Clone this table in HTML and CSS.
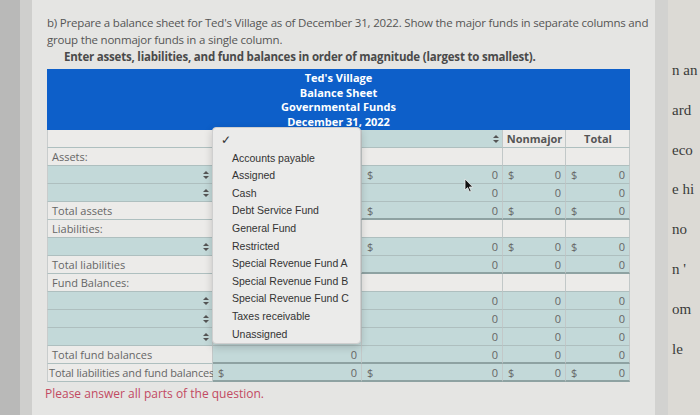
FILE: index.html
```html
<!DOCTYPE html>
<html>
<head>
<meta charset="utf-8">
<link rel="stylesheet" href="styles.css">
</head>
<body>
<div class="screen">
  <div class="edge-dark"></div>
  <div class="edge-light"></div>
  <main class="page">
    <p class="q">b) Prepare a balance sheet for Ted's Village as of December 31, 2022. Show the major funds in separate columns and group the nonmajor funds in a single column.</p>
    <p class="instr">Enter assets, liabilities, and fund balances in order of magnitude (largest to smallest).</p>
    <div class="sheet">
      <div class="banner">
        <div>Ted's Village</div>
        <div>Balance Sheet</div>
        <div>Governmental Funds</div>
        <div>December 31, 2022</div>
      </div>
      <div class="grid">
        <!-- column header row -->
        <div class="c lab light"></div>
        <div class="c teal sel"><span class="arw"></span></div>
        <div class="c teal sel"><span class="arw"></span></div>
        <div class="c light hd">Nonmajor</div>
        <div class="c light hd">Total</div>

        <!-- Assets: -->
        <div class="c lab light">Assets:</div>
        <div class="c light"></div><div class="c light"></div><div class="c light"></div><div class="c light"></div>

        <div class="c lab teal sel"><span class="arw"></span></div>
        <div class="c teal v"><span>$</span><span>0</span></div>
        <div class="c teal v"><span>$</span><span>0</span></div>
        <div class="c teal v"><span>$</span><span>0</span></div>
        <div class="c teal v"><span>$</span><span>0</span></div>

        <div class="c lab teal sel"><span class="arw"></span></div>
        <div class="c teal v"><span></span><span>0</span></div>
        <div class="c teal v"><span></span><span>0</span></div>
        <div class="c teal v"><span></span><span>0</span></div>
        <div class="c teal v"><span></span><span>0</span></div>

        <div class="c lab light">Total assets</div>
        <div class="c teal v tb"><span>$</span><span>0</span></div>
        <div class="c teal v tb"><span>$</span><span>0</span></div>
        <div class="c teal v tb"><span>$</span><span>0</span></div>
        <div class="c teal v tb"><span>$</span><span>0</span></div>

        <div class="c lab light">Liabilities:</div>
        <div class="c light"></div><div class="c light"></div><div class="c light"></div><div class="c light"></div>

        <div class="c lab teal sel"><span class="arw"></span></div>
        <div class="c teal v"><span>$</span><span>0</span></div>
        <div class="c teal v"><span>$</span><span>0</span></div>
        <div class="c teal v"><span>$</span><span>0</span></div>
        <div class="c teal v"><span>$</span><span>0</span></div>

        <div class="c lab light">Total liabilities</div>
        <div class="c teal v tb"><span></span><span>0</span></div>
        <div class="c teal v tb"><span></span><span>0</span></div>
        <div class="c teal v tb"><span></span><span>0</span></div>
        <div class="c teal v tb"><span></span><span>0</span></div>

        <div class="c lab light">Fund Balances:</div>
        <div class="c teal"></div><div class="c light"></div><div class="c light"></div><div class="c light"></div>

        <div class="c lab teal sel"><span class="arw"></span></div>
        <div class="c teal v"><span></span><span>0</span></div>
        <div class="c teal v"><span></span><span>0</span></div>
        <div class="c teal v"><span></span><span>0</span></div>
        <div class="c teal v"><span></span><span>0</span></div>

        <div class="c lab teal sel"><span class="arw"></span></div>
        <div class="c teal v"><span></span><span>0</span></div>
        <div class="c teal v"><span></span><span>0</span></div>
        <div class="c teal v"><span></span><span>0</span></div>
        <div class="c teal v"><span></span><span>0</span></div>

        <div class="c lab teal sel"><span class="arw"></span></div>
        <div class="c teal v"><span></span><span>0</span></div>
        <div class="c teal v"><span></span><span>0</span></div>
        <div class="c teal v"><span></span><span>0</span></div>
        <div class="c teal v"><span></span><span>0</span></div>

        <div class="c lab light">Total fund balances</div>
        <div class="c teal v tb"><span></span><span>0</span></div>
        <div class="c teal v tb"><span></span><span>0</span></div>
        <div class="c teal v tb"><span></span><span>0</span></div>
        <div class="c teal v tb"><span></span><span>0</span></div>

        <div class="c lab light tl"><span>Total liabilities and fund balances</span></div>
        <div class="c teal v tb"><span>$</span><span>0</span></div>
        <div class="c teal v tb"><span>$</span><span>0</span></div>
        <div class="c teal v tb"><span>$</span><span>0</span></div>
        <div class="c teal v tb"><span>$</span><span>0</span></div>
      </div>

      <ul class="menu">
        <li class="chk">✓</li>
        <li>Accounts payable</li>
        <li>Assigned</li>
        <li>Cash</li>
        <li>Debt Service Fund</li>
        <li>General Fund</li>
        <li>Restricted</li>
        <li>Special Revenue Fund A</li>
        <li>Special Revenue Fund B</li>
        <li>Special Revenue Fund C</li>
        <li>Taxes receivable</li>
        <li>Unassigned</li>
      </ul>

      <svg class="cursor" width="10" height="15" viewBox="0 0 10 15">
        <path d="M1 1 L1 12 L3.6 9.6 L5.6 14 L7.2 13.3 L5.3 9 L8.8 9 Z" fill="#111" stroke="#eee" stroke-width="0.8"/>
      </svg>
    </div>
    <p class="warn">Please answer all parts of the question.</p>
  </main>
  <div class="gap"></div>
  <aside class="other">
    <div>n an</div>
    <div>ard</div>
    <div>eco</div>
    <div>e hi</div>
    <div>no</div>
    <div>n '</div>
    <div>om</div>
    <div>le</div>
  </aside>
</div>
</body>
</html>
```
FILE: styles.css
```css
* { box-sizing: border-box; }
html, body { margin: 0; padding: 0; }
body {
  width: 700px;
  height: 415px;
  overflow: hidden;
  background: #d8d8d6;
  font-family: "Open Sans", "Liberation Sans", sans-serif;
}
.screen {
  display: flex;
  height: 415px;
}
.edge-dark { width: 20px; background: #b9b9b8; }
.edge-light { width: 12px; background: #cfcfcd; }
.page {
  width: 623px;
  background: #e5e5e3;
  padding: 14px 0 0 15px;
  color: #555;
}
.q {
  margin: 0;
  font-size: 11.5px;
  letter-spacing: -0.2px;
  line-height: 17px;
  width: 604px;
}
.instr {
  margin: 0 0 4px 17px;
  font-size: 11.5px;
  letter-spacing: -0.2px;
  line-height: 17px;
  font-weight: 700;
  color: #4a4a4a;
}
.sheet {
  position: relative;
  width: 583px;
}
.banner {
  height: 61px;
  background: #0d5fc9;
  color: #fff;
  font-weight: 700;
  font-size: 11px;
  line-height: 14.7px;
  text-align: center;
  padding: 2px 0 0 0;
  overflow: hidden;
}
.grid {
  display: grid;
  grid-template-columns: 166px 149px 141px 63px 64px;
  grid-auto-rows: 18px;
}
.c {
  border-right: 1px solid #c2c8c8;
  border-bottom: 1px solid #aebfbf;
  font-size: 11px;
  color: #666;
  line-height: 17px;
  display: flex;
  align-items: center;
  padding: 0 4px 0 5px;
  white-space: nowrap;
}
.light { background: #ecebe9; }
.teal { background: #c3d9d9; }
.lab { padding-left: 4px; border-left: 1px solid #c8cccc; }
.hd { justify-content: center; font-weight: 700; color: #555; }
.sel { justify-content: flex-end; padding-right: 3px; }
.arw {
  width: 0;
  height: 0;
  position: relative;
  border-left: 3px solid transparent;
  border-right: 3px solid transparent;
  border-bottom: 3.5px solid #555;
  margin-bottom: 5px;
}
.arw::after {
  content: "";
  position: absolute;
  left: -3px;
  top: 5px;
  border-left: 3px solid transparent;
  border-right: 3px solid transparent;
  border-top: 3.5px solid #555;
}
.v { justify-content: space-between; }
.tb { border-bottom: 2px solid #8ea2a2; }
.tl { padding-left: 1px; letter-spacing: -0.15px; }
.menu {
  position: absolute;
  left: 165px;
  top: 58px;
  width: 149px;
  height: 217px;
  margin: 0;
  padding: 4px 0 0 0;
  list-style: none;
  background: #ebebea;
  border: 1px solid #cfcfcf;
  border-radius: 4px;
  box-shadow: 0 3px 8px rgba(0,0,0,0.18);
  font-family: "Liberation Sans", Arial, sans-serif;
  font-size: 10.5px;
  color: #333;
}
.menu li {
  height: 17.6px;
  line-height: 17.6px;
  padding-left: 19px;
  white-space: nowrap;
}
.menu li.chk { padding-left: 8px; font-size: 12px; }
.cursor {
  position: absolute;
  left: 417px;
  top: 109px;
}
.warn {
  margin: 3px 0 0 -2px;
  font-size: 12px;
  line-height: 17px;
  color: #c24a62;
}
.gap { width: 13px; background: #d2d2d0; }
.other {
  flex: 1;
  background: #dcdad5;
  font-family: "Liberation Serif", serif;
  font-size: 15px;
  color: #3a3a3a;
  padding: 60px 0 0 4px;
  white-space: nowrap;
  overflow: hidden;
}
.other div { height: 39.8px; line-height: 20px; }
```
